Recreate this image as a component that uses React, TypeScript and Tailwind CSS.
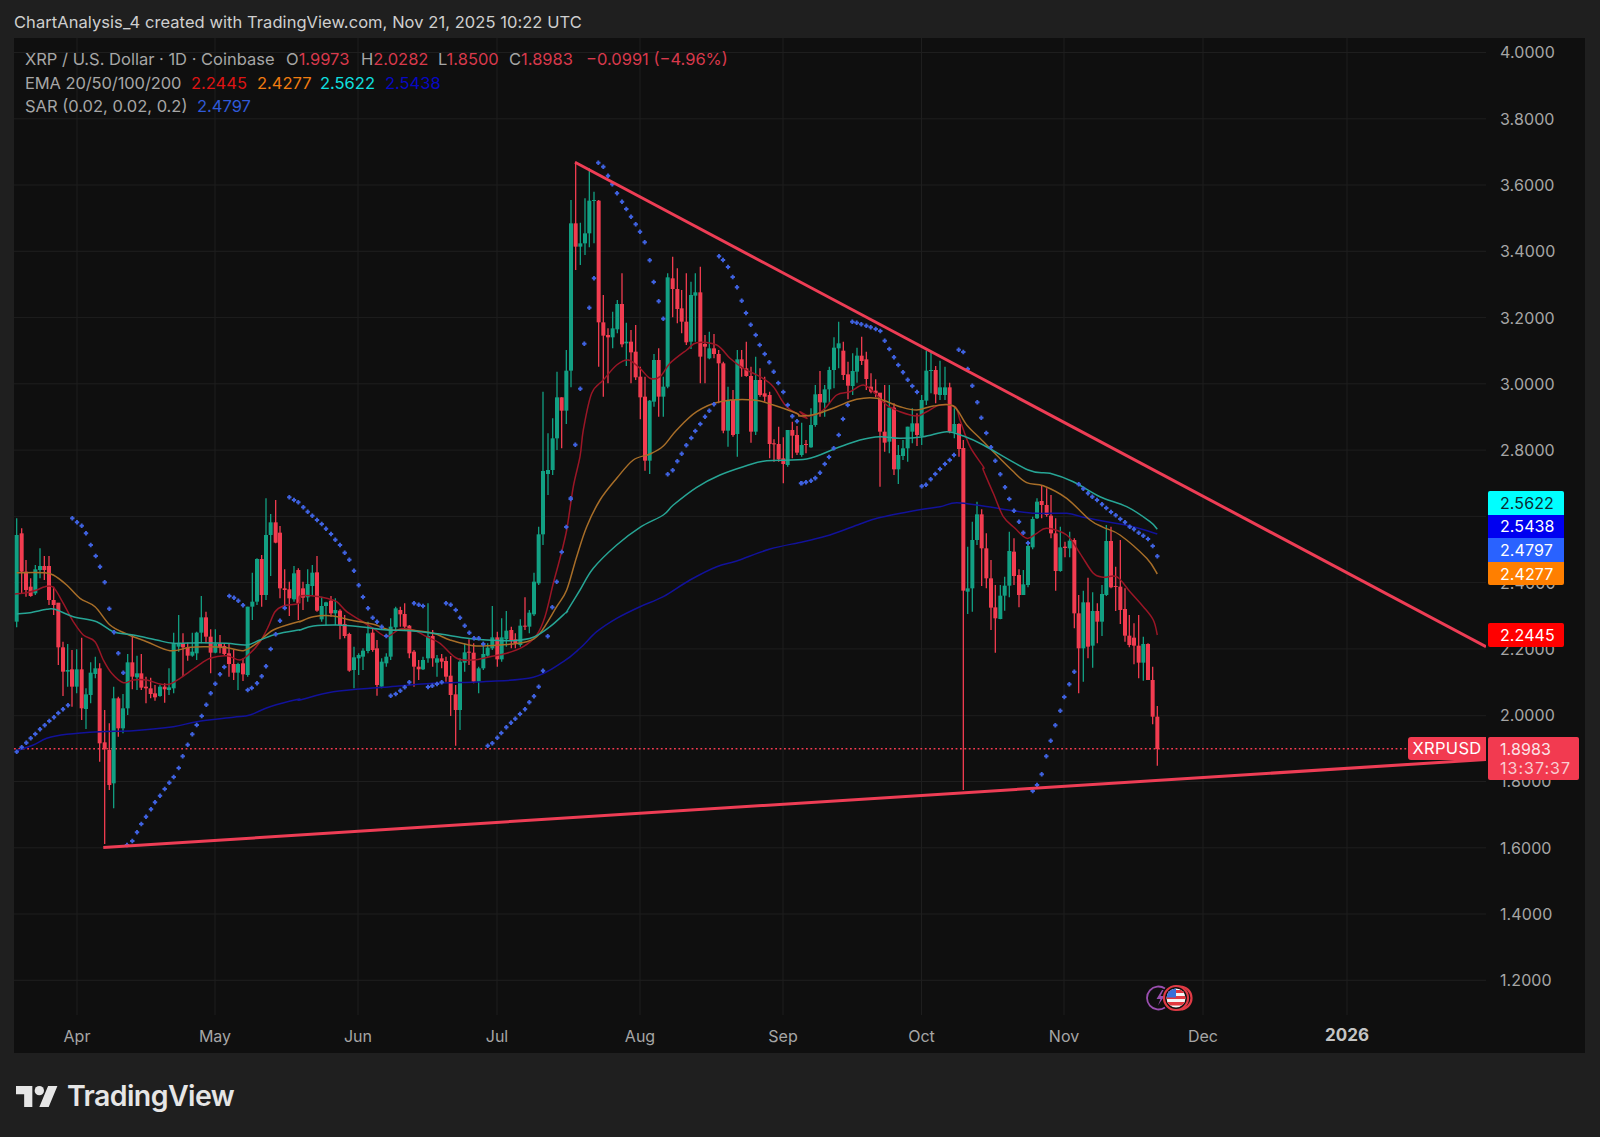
import React from "react";

type C = number[];
const Z5: C[] = [[50,85,135,395,412,1],[65,115,130,245,310,0],[78,210,245,300,320,0],[92,265,290,318,320,0],[106,225,238,310,315,1],[120,175,228,240,265,1],[133,198,228,240,270,0],[147,198,228,330,345,0],[161,290,330,345,375,0],[175,340,338,472,525,0],[189,455,472,545,618,0],[203,462,540,545,590,1],[216,480,538,590,650,0],[230,478,538,590,610,1],[245,443,538,655,690,0],[258,595,613,657,717,1],[272,517,548,615,640,1],[286,500,535,552,565,1],[299,520,535,760,815,0],[314,660,757,778,1062,0],[328,700,780,885,900,0],[341,590,625,880,955,1],[355,620,625,715,740,0],[369,612,655,715,730,1],[383,492,517,655,675,1],[397,435,517,560,598,0],[411,497,550,562,600,1],[424,492,550,593,600,0],[438,560,590,595,640,0],[452,563,595,612,625,0],[465,585,610,622,632,0],[480,585,590,618,620,1],[494,580,590,598,638,0],[507,535,592,600,615,1],[521,428,460,595,610,1],[536,375,458,470,485,1],[549,430,460,472,558,0],[563,458,472,497,512,0],[577,428,485,497,500,1],[590,425,428,490,510,1],[604,318,382,428,460,1],[618,365,382,440,460,0],[632,418,440,488,550,0],[646,418,462,488,490,1],[660,435,462,472,490,0],[673,460,468,492,495,0],[687,460,490,522,560,0],[701,480,522,548,570,0],[714,518,522,548,600,1],[729,505,520,553,573,0],[743,350,350,555,560,1],[757,248,335,350,390,1],[771,205,207,335,345,1],[785,195,207,315,350,0],[798,25,135,315,330,1],[812,72,97,135,258,1],[827,30,97,158,160,0],[840,108,128,295,325,0],[854,238,295,300,350,0],[868,275,298,325,378,0],[882,228,250,328,335,1],[895,235,240,340,390,0]];
const Z6: C[] = [[9,305,325,353,390,0],[23,268,312,352,365,1],[37,255,278,318,345,1],[51,228,277,392,395,0],[65,350,378,418,425,1],[78,365,367,378,435,1],[93,348,362,400,410,0],[106,355,390,400,435,1],[120,388,392,435,478,0],[134,405,432,468,475,0],[148,458,462,572,575,0],[162,500,532,570,625,1],[176,520,525,535,585,1],[189,505,512,530,570,1],[204,425,460,513,520,1],[218,445,458,510,515,0],[231,480,505,615,647,0],[245,535,545,620,625,1],[259,520,530,550,560,1],[272,415,440,530,540,1],[287,380,385,442,450,1],[301,380,390,403,440,0],[314,370,402,440,450,0],[328,435,437,520,535,0],[342,510,515,560,620,0],[356,540,560,568,600,0],[369,530,540,568,570,1],[384,370,468,535,548,1],[398,450,468,535,560,0],[411,525,535,548,590,1],[425,522,535,545,565,0],[438,530,543,590,605,0],[452,528,587,645,708,0],[467,615,643,690,797,0],[480,535,545,690,750,1],[494,490,517,548,575,1],[507,478,515,518,555,0],[521,490,518,605,610,0],[536,560,565,605,640,1],[550,485,522,565,570,1],[563,490,503,527,530,1],[577,378,472,505,510,1],[592,455,472,538,560,0],[605,415,472,538,545,1],[619,393,452,478,500,1],[634,440,450,480,505,0],[646,460,478,490,505,0],[661,418,437,495,500,1],[675,352,437,440,450,0],[688,390,398,440,460,1],[702,278,305,403,408,1],[716,140,163,310,315,1],[729,-265,-27,163,195,1]];
const Z7: C[] = [[84,850,960,972,1035,1],[98,805,865,960,975,1],[111,665,742,865,900,1],[125,742,742,782,895,0],[139,600,662,782,822,1],[153,150,220,662,712,1],[167,35,220,290,360,0],[181,218,280,290,345,1],[195,145,250,280,315,1],[208,55,152,250,292,1],[222,125,150,152,280,1],[236,150,152,517,650,0],[250,435,517,557,740,0],[264,535,555,562,700,0],[278,485,535,562,595,1],[292,450,462,538,550,1],[306,370,462,583,592,0],[319,518,575,580,648,1],[333,540,575,607,700,0],[347,525,605,682,690,0],[361,650,680,742,808,0],[375,680,740,932,962,0],[389,750,752,932,972,1],[402,612,630,755,770,1],[416,595,630,740,800,0],[430,680,710,740,800,1],[443,370,382,710,715,1],[458,320,385,417,502,0],[472,355,417,477,520,0],[485,420,475,515,550,0],[499,370,515,577,585,0],[513,395,435,575,597,1],[526,370,427,437,575,1],[541,350,427,620,700,0],[555,555,582,590,700,0],[568,545,595,625,628,1],[582,552,595,612,625,0],[596,600,612,640,760,0],[610,635,640,842,850,0],[624,710,752,842,890,1],[639,720,750,855,860,0],[652,600,628,852,920,1],[665,600,628,655,680,0],[679,575,655,678,680,0],[693,650,678,845,878,0],[707,620,690,845,855,1],[720,655,690,735,740,0],[734,680,730,740,755,0],[749,725,735,882,925,0],[762,868,880,882,935,0],[776,830,882,928,935,0],[790,862,925,942,1000,0],[803,840,840,945,950,1],[817,815,840,857,925,0],[831,828,855,908,915,0],[845,818,885,915,920,1],[858,870,882,885,910,0],[873,775,825,892,893,1],[886,705,733,825,830,1]];
const Z8: C[] = [[60,183,252,277,320,0],[74,225,238,278,320,1],[88,170,180,238,280,1],[102,82,113,180,235,1],[116,35,100,115,175,1],[130,95,122,195,210,0],[144,155,193,227,268,0],[158,130,183,228,255,1],[171,113,137,185,218,1],[185,80,137,153,165,0],[199,125,148,207,240,0],[213,190,230,245,250,0],[227,208,242,250,262,0],[240,250,248,365,530,0],[254,225,365,398,425,0],[268,225,293,395,430,1],[282,280,293,478,495,0],[295,405,435,478,522,1],[309,390,415,438,450,1],[323,350,350,415,455,1],[337,295,340,365,400,1],[351,310,340,375,408,0],[365,255,270,378,405,1],[379,122,182,272,285,1],[393,125,180,183,250,1],[407,168,180,253,280,0],[420,152,232,255,270,1],[435,170,232,255,270,1],[449,218,232,365,370,0],[463,295,342,368,385,1],[477,340,342,417,440,0]];
const Z9: C[] = [[70,-90,-66,362,960,0],[83,230,355,365,432,1],[97,155,210,355,425,1],[111,95,133,210,225,1],[125,118,133,235,348,0],[139,190,235,325,355,0],[153,270,325,413,480,0],[166,345,412,445,548,0],[181,345,377,447,448,1],[194,320,347,377,422,1],[208,185,243,347,382,1],[222,205,245,318,345,0],[237,298,315,375,412,0],[250,300,343,375,375,1],[264,225,228,345,352,1],[278,140,147,232,238,1],[291,85,95,145,147,1],[305,45,93,105,145,0],[320,55,105,135,140,0],[333,75,137,190,205,0],[347,145,190,303,362,0],[361,170,232,303,305,1],[375,215,230,234,262,0],[389,185,212,235,262,1],[403,205,210,430,475,0],[416,375,430,535,670,0],[430,362,397,535,635,1],[444,323,397,530,565,0],[458,367,423,527,593,1],[472,400,423,455,520,0],[486,345,372,455,498,1],[499,165,213,375,378,1],[513,170,213,352,355,0],[527,290,348,350,423,0],[541,210,350,420,462,0],[555,355,417,497,515,0],[568,435,497,525,532,0],[582,460,503,527,583,0],[596,435,527,578,625,0],[610,500,522,578,632,1],[624,520,522,630,630,0],[638,590,630,740,763,0],[652,708,740,837,887,0]];

const off = { z5: [0, 490], z6: [300, 480], z7: [520, 150], z8: [800, 310], z9: [940, 470], z10: [560, 430] };
const mapC = (a: C[], o: number[]) => a.map(([x, w, b, e, l, g]) => [o[0] + x / 3, o[1] + w / 3, o[1] + b / 3, o[1] + e / 3, o[1] + l / 3, g]);
const candles = [...mapC(Z5, off.z5), ...mapC(Z6, off.z6), ...mapC(Z7, off.z7), ...mapC(Z8, off.z8), ...mapC(Z9, off.z9)];

const mapP = (a: number[][], o: number[]) => a.map(([x, y]) => [o[0] + x / 3, o[1] + y / 3]);
// Catmull-Rom smoothing of the digitised indicator lines
const smooth = (p: number[][]) => {
  let d = `M${p[0][0].toFixed(1)} ${p[0][1].toFixed(1)}`;
  for (let i = 0; i < p.length - 1; i++) {
    const a = p[Math.max(i - 1, 0)], b = p[i], c = p[i + 1], e = p[Math.min(i + 2, p.length - 1)];
    const c1x = b[0] + (c[0] - a[0]) / 6, c1y = b[1] + (c[1] - a[1]) / 6;
    const c2x = c[0] - (e[0] - b[0]) / 6, c2y = c[1] - (e[1] - b[1]) / 6;
    d += `C${c1x.toFixed(1)} ${c1y.toFixed(1)} ${c2x.toFixed(1)} ${c2y.toFixed(1)} ${c[0].toFixed(1)} ${c[1].toFixed(1)}`;
  }
  return d;
};

const ema20 = [...mapP([[45,312],[80,308],[110,300],[135,290],[160,292],[190,340],[220,395],[250,435],[285,455],[310,510],[335,550],[370,578],[400,570],[440,570],[480,582],[510,582],[540,565],[590,530],[630,505],[680,497],[720,510],[750,490],[780,455],[805,410],[825,365],[850,348],[895,340]], off.z5), ...mapP([[0,348],[40,348],[80,355],[110,365],[140,395],[180,420],[220,445],[260,470],[300,447],[340,450],[380,470],[420,490],[470,535],[520,540],[570,530],[620,520],[670,500],[710,465],[735,410],[760,310]], off.z6), ...mapP([[0,385],[20,300],[40,170],[60,80]], off.z10), ...mapP([[190,840],[215,730],[250,690],[290,645],[325,630],[360,655],[390,685],[420,680],[450,640],[500,600],[530,578],[590,585],[630,625],[670,655],[720,680],[760,710],[800,770],[860,805]], off.z7), ...mapP([[0,305],[30,318],[70,300],[110,255],[150,245],[190,225],[225,250],[260,285],[300,305],[350,318],[380,305],[420,285],[465,290],[480,330],[510,410],[550,470]], off.z8), ...mapP([[130,0],[160,70],[190,140],[225,175],[260,205],[290,190],[320,175],[380,195],[420,250],[460,310],[490,322],[530,320],[570,365],[610,410],[640,450],[652,495]], off.z9)];
const ema50 = [...mapP([[50,248],[130,248],[160,255],[200,285],[240,325],[285,350],[330,405],[380,432],[440,455],[510,482],[570,472],[620,470],[680,473],[730,482],[770,460],[820,420],[895,395]], off.z5), ...mapP([[0,425],[40,410],[100,408],[150,420],[220,433],[270,450],[330,450],[400,460],[450,480],[520,497],[600,495],[680,485],[720,460],[770,380]], off.z6), ...mapP([[20,480],[50,380],[80,290],[120,210],[170,145],[220,90],[270,72],[310,48],[350,0]], off.z10), ...mapP([[530,785],[600,755],[700,750],[760,765],[830,790]], off.z7), ...mapP([[0,318],[50,312],[110,290],[170,268],[230,265],[300,290],[350,300],[400,288],[460,288],[500,345],[540,385]], off.z8), ...mapP([[215,0],[260,38],[310,47],[380,85],[450,150],[490,172],[540,195],[620,265],[652,312]], off.z9)];
const ema100 = [...mapP([[50,372],[90,368],[140,358],[165,358],[220,380],[290,395],[340,425],[400,435],[470,450],[520,460],[600,458],[680,460],[740,465],[780,450],[830,432],[895,420]], off.z5), ...mapP([[0,450],[40,438],[110,435],[180,440],[260,450],[330,452],[420,462],[490,473],[560,480],[640,482],[700,472],[750,440],[800,395]], off.z6), ...mapP([[20,545],[60,480],[100,415],[170,345],[240,292],[310,255],[340,225],[410,172],[480,135],[550,110],[620,92],[740,87],[830,54]], off.z10), ...mapP([[180,390],[240,380],[300,385],[370,380],[440,365],[490,378],[550,405]], off.z8), ...mapP([[265,0],[330,10],[400,35],[480,80],[560,110],[630,155],[652,178]], off.z9)];
const ema200 = [...mapP([[50,782],[100,765],[140,745],[200,733],[300,725],[400,722],[520,710],[590,695],[700,682],[750,675],[810,650],[895,628]], off.z5), ...mapP([[0,660],[100,635],[250,622],[400,610],[550,605],[700,592]], off.z6), ...mapP([[10,695],[60,655],[110,605],[170,565],[240,530],[310,500],[390,450],[470,410],[530,393],[630,357],[730,335],[810,315],[900,282]], off.z10), [878,518],[918,510], ...mapP([[0,110],[50,98],[130,108],[220,122],[290,130],[380,130],[430,142],[500,155],[580,170],[652,192]], off.z9)];

const sar = [
  ...mapP([[217,85],[231,97],[245,107],[258,130],[272,165],[287,198],[300,230],[314,277],[328,356],[342,427],[355,490],[370,548],[50,785],[65,772],[79,758],[92,745],[106,732],[120,718],[134,706],[148,693],[162,682],[175,669],[189,658],[204,646],[381,1065],[397,1053],[411,1027],[424,1002],[438,980],[453,958],[465,937],[480,917],[494,897],[508,878],[521,861],[536,834],[548,799],[563,764],[577,733],[590,705],[605,678],[619,644],[632,610],[646,581],[660,553],[673,531],[743,600],[755,594],[771,580],[785,559],[798,529],[812,477],[827,433],[840,392],[854,354],[688,318],[702,323],[715,332],[729,346],[868,22],[882,30],[895,37]], off.z5),
  ...mapP([[10,82],[23,95],[37,107],[51,120],[65,132],[78,146],[93,162],[106,179],[120,195],[134,218],[148,239],[162,272],[176,316],[189,351],[204,385],[218,413],[231,425],[245,440],[259,468],[272,647],[287,642],[301,632],[314,622],[328,607],[342,370],[356,374],[369,378],[384,621],[397,617],[411,612],[425,607],[438,370],[452,374],[467,390],[480,413],[494,437],[508,458],[522,475],[536,475],[550,492],[563,797],[577,790],[592,773],[604,759],[619,742],[633,728],[646,716],[660,702],[675,688],[688,667],[702,649],[716,620],[729,572],[743,469],[757,382],[770,305],[785,216],[799,141],[812,57]], off.z6),
  ...mapP([[152,1045],[166,884],[181,716],[193,581],[208,473],[222,385],[235,38],[250,50],[264,77],[277,103],[291,130],[306,155],[319,177],[333,200],[347,223],[360,245],[374,277],[389,331],[401,396],[416,454],[430,506],[443,973],[458,961],[472,934],[485,911],[499,886],[514,864],[526,843],[541,822],[555,800],[568,782],[582,763],[597,319],[609,330],[624,351],[638,381],[651,412],[665,452],[678,489],[692,524],[707,555],[719,585],[734,612],[748,637],[761,665],[775,699],[790,726],[803,765],[817,799],[831,814],[843,1000],[858,997],[873,992],[886,984]], off.z7),
  ...mapP([[5,520],[18,517],[33,512],[46,505],[60,488],[74,462],[87,441],[101,415],[116,375],[129,327],[143,285],[157,35],[170,38],[184,43],[199,47],[212,52],[227,57],[241,63],[254,92],[268,117],[282,142],[295,165],[309,187],[323,209],[337,228],[351,246],[365,529],[378,524],[392,508],[406,492],[420,477],[435,462],[449,450],[462,435],[476,119],[490,126],[503,177],[517,227],[532,277],[544,323],[559,369],[573,412],[586,452]], off.z8),
  ...mapP([[181,13],[195,52],[208,87],[222,122],[237,155],[250,188],[264,219],[278,963],[291,945],[305,913],[319,859],[332,812],[346,766],[361,722],[373,681],[388,643],[403,605],[416,43],[430,56],[444,70],[457,80],[471,90],[486,103],[499,114],[513,126],[527,136],[541,147],[555,157],[569,170],[582,178],[596,188],[610,197],[624,207],[638,228],[652,259]], off.z9),
];
const sarPath = sar.map(([x, y]) => `M${(x - 2.2).toFixed(1)} ${y.toFixed(1)}H${(x + 2.2).toFixed(1)}M${x.toFixed(1)} ${(y - 2.2).toFixed(1)}V${(y + 2.2).toFixed(1)}`).join("");

const gridY = [52.5, 118.8, 185, 251.3, 317.6, 383.8, 450.1, 516.4, 582.6, 648.9, 715.7, 781.5, 847.8, 914, 980.3];
const gridX = [77, 215, 358, 497, 640, 783, 921.5, 1064, 1203, 1347];
const prices = ["4.0000", "3.8000", "3.6000", "3.4000", "3.2000", "3.0000", "2.8000", "2.6000", "2.4000", "2.2000", "2.0000", "1.8000", "1.6000", "1.4000", "1.2000"];

function Chart() {
  return (
    <svg viewBox="14 38 1472 977" className="block w-[1472px] h-[977px] blur-[0.35px]">
      <g stroke="#1e1e1e" strokeWidth="1">
        {gridY.map((y) => <line key={y} x1="14" x2="1486" y1={y} y2={y} />)}
        {gridX.map((x) => <line key={x} x1={x} x2={x} y1="38" y2="1015" />)}
      </g>
      <line x1="14" x2="1408" y1="748.7" y2="748.7" stroke="#f23a50" strokeWidth="1.4" strokeDasharray="1.8 2.6" />
      {candles.map(([x, w, b, e, l, g], i) => {
        const col = g ? "#12a083" : "#f23c50";
        return (
          <g key={i}>
            <line x1={x} x2={x} y1={w} y2={l} stroke={col} strokeWidth="1.3" />
            <rect x={x - 2} y={b} width="4" height={Math.max(e - b, 1)} fill={col} />
          </g>
        );
      })}
      <g fill="none" strokeWidth="1.5" strokeLinejoin="round">
        <path d={smooth(ema200)} stroke="#12129a" />
        <path d={smooth(ema20)} stroke="#9a1626" />
        <path d={smooth(ema50)} stroke="#a86e28" />
        <path d={smooth(ema100)} stroke="#27a595" />
      </g>
      <path d={sarPath} stroke="#3f62e0" strokeWidth="1.9" fill="none" />
      <line x1="575" y1="162.3" x2="1486" y2="646.7" stroke="#ee3d55" strokeWidth="3" />
      <line x1="103.3" y1="847.5" x2="1486" y2="759.5" stroke="#ee3d55" strokeWidth="3" />
      <g>
        <path d="M1165 988.5A11.5 11.5 0 1 0 1165 1007.5" fill="none" stroke="#9a4fb0" strokeWidth="1.8" />
        <path d="M1162 990l-5.5 9h4l-2.5 6.5l6.5-9.500h-4l3-6z" fill="#9a4fb0" />
        <circle cx="1180" cy="998" r="11.500" fill="none" stroke="#e03a45" strokeWidth="2.2" />
        <circle cx="1176" cy="998" r="12" fill="#0f0f0f" stroke="#e03a45" strokeWidth="2.2" />
        <clipPath id="flag"><circle cx="1176" cy="998" r="9.500" /></clipPath>
        <g clipPath="url(#flag)">
          <rect x="1166" y="988" width="20" height="20" fill="#f5f5f5" />
          <rect x="1166" y="990" width="20" height="3" fill="#e2383f" />
          <rect x="1166" y="996" width="20" height="3" fill="#e2383f" />
          <rect x="1166" y="1002" width="20" height="3.500" fill="#e2383f" />
          <rect x="1166" y="988" width="10" height="9.500" fill="#3a6fd8" />
        </g>
      </g>
    </svg>
  );
}

export default function App() {
  return (
    <div className="w-[1600px] h-[1137px] bg-[#1f1f1f] flex flex-col overflow-hidden font-[Inter,'Liberation_Sans',sans-serif]">
      <div className="h-[38px] pl-[14px] pt-[6px] flex items-center text-[16.500px] tracking-[0.06px] text-[#cfcfcf] shrink-0">
        ChartAnalysis_4 created with TradingView.com, Nov 21, 2025 10:22 UTC
      </div>
      <div className="ml-[14px] w-[1571px] h-[1015px] bg-[#0f0f0f] flex flex-col shrink-0">
        <div className="flex h-[977px] shrink-0">
          <div className="relative w-[1472px] shrink-0">
            <Chart />
            <div className="absolute left-[11px] top-[10px] flex flex-col text-[16.500px] leading-[23.5px] text-[#a6a6a6]">
              <div className="flex">
                <span className="w-[261px]">XRP / U.S. Dollar · 1D · Coinbase</span>
                <span className="w-[75px]">O<span className="text-[#d8394c]">1.9973</span></span>
                <span className="w-[77px]">H<span className="text-[#d8394c]">2.0282</span></span>
                <span className="w-[71px]">L<span className="text-[#d8394c]">1.8500</span></span>
                <span className="w-[77px]">C<span className="text-[#d8394c]">1.8983</span></span>
                <span className="text-[#d8394c]">−0.0991 (−4.96%)</span>
              </div>
              <div className="flex">
                <span className="w-[166px] tracking-[-0.1px]">EMA 20/50/100/200</span>
                <span className="w-[66px] text-[#dd1414]">2.2445</span>
                <span className="w-[63px] text-[#f07c10]">2.4277</span>
                <span className="w-[65px] text-[#0fe0e0]">2.5622</span>
                <span className="text-[#0808c4]">2.5438</span>
              </div>
              <div className="flex">
                <span className="w-[172px]">SAR (0.02, 0.02, 0.2)</span>
                <span className="text-[#2f5ad8]">2.4797</span>
              </div>
            </div>
          </div>
          <div className="relative w-[99px] shrink-0 text-[16px] text-[#a6a6a6]">
            <div className="flex flex-col -mt-[18.7px] pl-[14px] tracking-[0.1px]">
              {prices.map((p) => <div key={p} className="h-[66.27px] shrink-0 flex items-center">{p}</div>)}
            </div>
            <div className="absolute left-[2px] top-[453px] w-[76px] flex flex-col text-white tracking-[0.1px]">
              <div className="h-[23.6px] pl-[12px] flex items-center rounded-t-[2px] bg-[#00ffff] text-[#0c2b33]">2.5622</div>
              <div className="h-[23.6px] pl-[12px] flex items-center bg-[#0000f0]">2.5438</div>
              <div className="h-[23.6px] pl-[12px] flex items-center bg-[#2962ff]">2.4797</div>
              <div className="h-[23.6px] pl-[12px] flex items-center rounded-b-[2px] bg-[#ff7f00]">2.4277</div>
            </div>
            <div className="absolute left-[2px] top-[585px] w-[76px] h-[24px] pl-[12px] flex items-center rounded-[2px] bg-[#ff0000] text-white tracking-[0.1px]">2.2445</div>
            <div className="absolute left-[-78px] top-[699px] w-[78px] h-[23px] flex items-center justify-center rounded-l-[3px] bg-[#f23a50] text-white text-[16.500px] tracking-[0.3px]">XRPUSD</div>
            <div className="absolute left-[2px] top-[699px] w-[91px] h-[43px] pl-[12px] flex flex-col justify-center rounded-[2px] bg-[#f23a50] text-[#fbe4e7] leading-[19px] tracking-[0.1px]">
              <span>1.8983</span>
              <span className="text-[#f9cdd2] tracking-[1px]">13:37:37</span>
            </div>
          </div>
        </div>
        <div className="flex-1 flex items-center text-[16px] text-[#a6a6a6] pt-[3px]">
          <span className="w-[40px] text-center ml-[43px]">Apr</span>
          <span className="w-[40px] text-center ml-[98px]">May</span>
          <span className="w-[40px] text-center ml-[103px]">Jun</span>
          <span className="w-[40px] text-center ml-[99px]">Jul</span>
          <span className="w-[40px] text-center ml-[103px]">Aug</span>
          <span className="w-[40px] text-center ml-[103px]">Sep</span>
          <span className="w-[40px] text-center ml-[98.500px]">Oct</span>
          <span className="w-[40px] text-center ml-[102.500px]">Nov</span>
          <span className="w-[40px] text-center ml-[99px]">Dec</span>
          <span className="w-[48px] text-center ml-[100px] font-bold text-[17px] text-[#c4c4c4]">2026</span>
        </div>
      </div>
      <div className="flex-1 flex items-center pl-[16px] pt-[3px] gap-[9px] text-[#e6e6e6]">
        <svg viewBox="0 4 36 18" className="w-[42px] h-[21px] shrink-0" fill="#e6e6e6">
          <path d="M14 22H7V11H0V4h14v18zM28 22h-8l7.500-18h8L28 22z" />
          <circle cx="20" cy="8" r="4" />
        </svg>
        <span className="text-[28.500px] font-semibold tracking-[-0.6px]">TradingView</span>
      </div>
    </div>
  );
}
